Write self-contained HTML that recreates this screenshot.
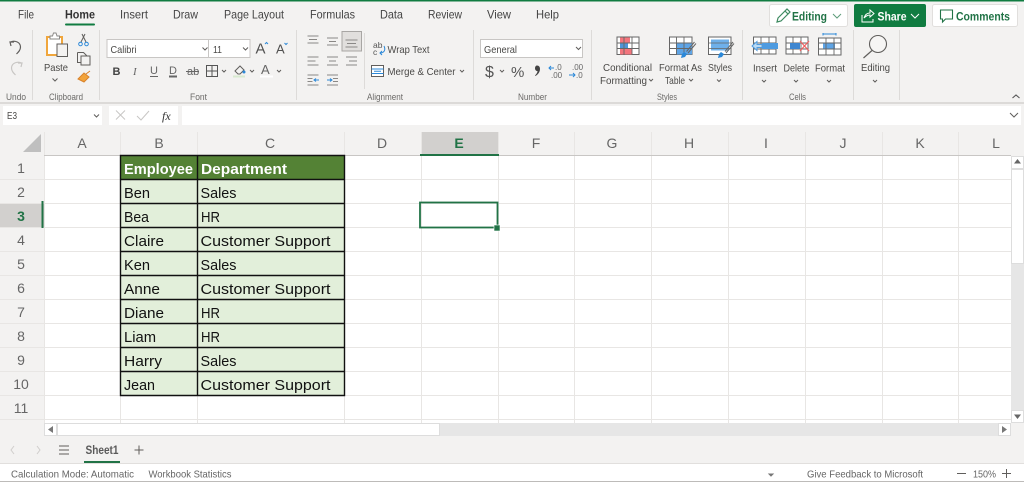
<!DOCTYPE html>
<html><head><meta charset="utf-8"><title>Excel</title>
<style>
html,body{margin:0;padding:0;background:#fff;width:1024px;height:482px;overflow:hidden}
svg{display:block;filter:blur(.35px)}
text{font-family:"Liberation Sans",sans-serif;fill:#3f3e3d;font-size:10px}
.tab{font-size:12px;fill:#444}
.lab{font-size:9.5px;fill:#6b6a68}
.rb{font-size:10.5px;fill:#4a4947}
.hd{font-size:14px;fill:#666;text-anchor:middle}
.c{font-size:14.5px;fill:#111}
.h{font-size:14.5px;fill:#fff;font-weight:bold}
.st{font-size:10.5px;fill:#666}
.g{font-size:12px;fill:#217346;font-weight:bold}
</style></head><body>
<svg width="1024" height="482" viewBox="0 0 1024 482" xmlns="http://www.w3.org/2000/svg">
<rect width="1024" height="482" fill="#fff"/>
<!-- ribbon -->
<rect width="1024" height="132" fill="#f3f2f1"/>
<rect width="1024" height="1.5" fill="#107c41"/>
<rect y="102" width="1024" height="2" fill="#dcdad8"/>
<text class="tab" x="18" y="18.500" textLength="16" lengthAdjust="spacingAndGlyphs">File</text>
<text class="tab" x="65" y="18.500" textLength="30" lengthAdjust="spacingAndGlyphs" style="font-weight:bold;fill:#333">Home</text>
<rect x="65" y="23.500" width="30" height="2" rx="1" fill="#107c41"/>
<text class="tab" x="120" y="18.500" textLength="28" lengthAdjust="spacingAndGlyphs">Insert</text>
<text class="tab" x="173" y="18.500" textLength="25" lengthAdjust="spacingAndGlyphs">Draw</text>
<text class="tab" x="224" y="18.500" textLength="60" lengthAdjust="spacingAndGlyphs">Page Layout</text>
<text class="tab" x="310" y="18.500" textLength="45" lengthAdjust="spacingAndGlyphs">Formulas</text>
<text class="tab" x="380" y="18.500" textLength="23" lengthAdjust="spacingAndGlyphs">Data</text>
<text class="tab" x="428" y="18.500" textLength="34" lengthAdjust="spacingAndGlyphs">Review</text>
<text class="tab" x="487" y="18.500" textLength="24" lengthAdjust="spacingAndGlyphs">View</text>
<text class="tab" x="536" y="18.500" textLength="23" lengthAdjust="spacingAndGlyphs">Help</text>
<!-- top right buttons -->
<rect x="769.500" y="4.500" width="78" height="22" rx="2" fill="#fff" stroke="#e1dfdd"/>
<path d="M777 22l1-4 9-9 3 3-9 9zM785 11l3 3" fill="none" stroke="#3d8a60" stroke-width="1.200"/>
<text class="g" x="792" y="20.500" textLength="35" lengthAdjust="spacingAndGlyphs">Editing</text>
<path d="M833 14l4 4 4-4" fill="none" stroke="#5d9c7a" stroke-width="1"/>
<rect x="854" y="4" width="72" height="23" rx="2" fill="#107c41"/>
<path d="M862 15v7h11v-3M864 18c1-3 3-5 6-5v-3l4 3.500-4 3.500v-2c-2 0-4 1-6 3z" fill="none" stroke="#fff" stroke-width="1"/>
<text x="877.500" y="20.500" textLength="29" lengthAdjust="spacingAndGlyphs" style="font-size:12px;font-weight:bold;fill:#fff">Share</text>
<path d="M911 14l4 4 4-4" fill="none" stroke="#fff" stroke-width="1"/>
<rect x="932.500" y="4.500" width="85" height="22" rx="2" fill="#fff" stroke="#e1dfdd"/>
<path d="M940.500 10h12v9h-7l-3 3v-3h-2z" fill="none" stroke="#217346" stroke-width="1.100"/>
<text class="g" x="956" y="20.500" textLength="54" lengthAdjust="spacingAndGlyphs">Comments</text>
<!-- separators -->
<path d="M32.500 30v70M99.500 30v70M296.500 30v70M364.500 33v56M473.500 30v70M591.500 30v70M742.500 30v70M853.500 30v70M899.500 30v70" stroke="#dddbd9" stroke-width="1"/>
<!-- undo / redo -->
<path d="M11 46l-1 -4 4 0M10.500 42c4-2 10 0 10 5 0 3-2 5-4 7" fill="none" stroke="#605e5c" stroke-width="1.200"/>
<path d="M21 67l1-4-4 0M21.500 63c-4-2-10 0-10 5 0 3 2 5 4 7" fill="none" stroke="#c8c6c4" stroke-width="1.200"/>
<text class="lab" x="6" y="100" textLength="20" lengthAdjust="spacingAndGlyphs">Undo</text>
<!-- clipboard -->
<path d="M47 37h15v18H47z" fill="#fff" stroke="#f0a63c" stroke-width="2"/>
<path d="M50 36h2.500l1-3h2.500l1 3h2.500v3h-9.500z" fill="#fff" stroke="#8a8886"/>
<rect x="57" y="44" width="10.500" height="12.500" fill="#f3f2f1" stroke="#605e5c"/>
<text class="rb" x="44" y="71" textLength="24" lengthAdjust="spacingAndGlyphs">Paste</text>
<path d="M52.500 78.500l2.500 2.500 2.500-2.500M86 42l-4-8M81 42l4-8" fill="none" stroke="#605e5c"/>
<circle cx="80.500" cy="44" r="1.800" fill="none" stroke="#2b88d8"/><circle cx="86.500" cy="44" r="1.800" fill="none" stroke="#2b88d8"/>
<path d="M77.500 52.500h6l3 3v9h-5M77.500 52.500v10h3" fill="none" stroke="#605e5c"/><rect x="81" y="56" width="9" height="9" fill="#f3f2f1" stroke="#605e5c"/>
<path d="M78 79l6-6 5 4-5 5zM86 74l4-3" fill="#f2a33a" stroke="#d9822b"/>
<text class="lab" x="49" y="100" textLength="34" lengthAdjust="spacingAndGlyphs">Clipboard</text>
<!-- font -->
<rect x="107" y="39.500" width="143" height="18" fill="#fff" stroke="#c8c6c4"/>
<path d="M208.500 40v17" stroke="#c8c6c4"/>
<text class="rb" x="110.500" y="53" textLength="26" lengthAdjust="spacingAndGlyphs">Calibri</text>
<text class="rb" x="213" y="53" textLength="9" lengthAdjust="spacingAndGlyphs">11</text>
<path d="M202.500 47.500l2.500 2.500 2.500-2.500M243 47.500l2.500 2.500 2.500-2.500" fill="none" stroke="#605e5c"/>
<text x="255.500" y="53.500" style="font-size:15px;fill:#505050">A</text><path d="M265 44l1.500-1.500 1.500 1.500" fill="none" stroke="#2b88d8"/>
<text x="276" y="53.500" style="font-size:13px;fill:#505050">A</text><path d="M284.500 43l1.500 1.500 1.500-1.500" fill="none" stroke="#2b88d8"/>
<text x="112.500" y="75" style="font-size:11px;font-weight:bold;fill:#444">B</text>
<text x="133" y="75" style="font-size:11px;font-style:italic;fill:#666;font-family:'Liberation Serif',serif">I</text>
<text x="150" y="74" style="font-size:11px;fill:#666">U</text><path d="M150 76.500h8" stroke="#666"/>
<text x="169" y="74" style="font-size:11px;fill:#666">D</text><path d="M169 76.500h8" stroke="#666" stroke-width="2"/>
<text x="187" y="75" style="font-size:11px;fill:#666">ab</text><path d="M186 71.500h13" stroke="#666"/>
<path d="M206.500 65.500h11v11h-11zM212 65.500v11M206.500 71h11" fill="none" stroke="#555"/>
<path d="M222 70l2 2 2-2M250 70l2 2 2-2M277 70l2 2 2-2" fill="none" stroke="#605e5c"/>
<path d="M235 71l5-5 4 4-4 4h-2z" fill="none" stroke="#605e5c"/><circle cx="244" cy="72" r="1.500" fill="#2b88d8"/><rect x="233" y="75.500" width="12" height="2" fill="#d8ead0"/>
<text x="261" y="74" style="font-size:13px;fill:#666">A</text><rect x="260" y="75.500" width="13" height="2" fill="#fff"/>
<text class="lab" x="190" y="100" textLength="17" lengthAdjust="spacingAndGlyphs">Font</text>
<!-- alignment -->
<rect x="342" y="31.500" width="19.500" height="19.500" fill="#e1dfdd" stroke="#a8a6a4"/>
<path d="M307.500 36h11M309 39.500h8M307.500 43h11M327 38h11M329 41.500h7M327 45h11M345.500 40h12M347 43.500h9M345.500 47h12M307.500 57h11M307.500 61h8M307.500 65h11M327 57h11M329 61h7M327 65h11M346 57h11M349 61h8M346 65h11M307.500 75h11M307.500 78.500h5M307.500 81.500h5M307.500 85h11M327 75h11M333 78.500h5M333 81.500h5M327 85h11" stroke="#8a8886" stroke-width="1"/>
<path d="M319 80h-4M316 78.500l-2 1.500 2 1.500M327 80h4M330 78.500l2 1.500-2 1.500" fill="none" stroke="#2b88d8"/>
<text x="373" y="48" style="font-size:8.500px;fill:#555">ab</text><text x="373" y="55" style="font-size:8.500px;fill:#555">c</text>
<path d="M384 46c2 4 0 7-4 7M382 51l-2 2 2 2" fill="none" stroke="#2b88d8"/>
<text class="rb" x="387.500" y="53" textLength="42" lengthAdjust="spacingAndGlyphs">Wrap Text</text>
<rect x="371.500" y="65.500" width="12" height="11" fill="#fff" stroke="#605e5c"/><path d="M371.500 69h12M371.500 73.500h12M374 71.300h7" stroke="#2b88d8"/>
<text class="rb" x="387.500" y="75" textLength="68" lengthAdjust="spacingAndGlyphs">Merge &amp; Center</text>
<path d="M460 70l2 2 2-2" fill="none" stroke="#605e5c"/>
<text class="lab" x="367" y="100" textLength="36" lengthAdjust="spacingAndGlyphs">Alignment</text>
<!-- number -->
<rect x="480.500" y="39.500" width="102" height="18" fill="#fff" stroke="#c8c6c4"/>
<text class="rb" x="484" y="53" textLength="33" lengthAdjust="spacingAndGlyphs">General</text>
<path d="M576 47l2.500 2.500 2.500-2.500M500 70l2 2 2-2" fill="none" stroke="#605e5c"/>
<text x="485" y="77" style="font-size:16px;fill:#555">$</text>
<text x="511" y="77" style="font-size:15px;fill:#555">%</text>
<path d="M537 65.500c2 0 3 1.500 3 3.500 0 3-2 5.500-4.500 7l-.5-.5c1.500-1.500 2.500-3 2.500-4.500-1.500 0-2.500-1-2.500-3 0-1.500 1-2.500 2-2.500z" fill="#444"/>
<text x="555" y="70" style="font-size:8px;fill:#666">.0</text><text x="551" y="78" style="font-size:8px;fill:#666">.00</text>
<path d="M554 68h-5M551 66l-2 2 2 2" fill="none" stroke="#2b88d8"/>
<text x="572" y="70" style="font-size:8px;fill:#666">.00</text><text x="576" y="78" style="font-size:8px;fill:#666">.0</text>
<path d="M569 75h6M573 73l2 2-2 2" fill="none" stroke="#2b88d8"/>
<text class="lab" x="518" y="100" textLength="29" lengthAdjust="spacingAndGlyphs">Number</text>
<!-- styles -->
<rect x="617" y="37" width="22" height="17.500" fill="#fff" stroke="#666"/>
<rect x="620" y="37.500" width="10" height="6" fill="#f4757d"/><rect x="620" y="43" width="8" height="5.500" fill="#4f94d8"/><rect x="620" y="48.500" width="12" height="6" fill="#f4757d"/>
<path d="M617 43h22M617 48.500h22M624 37v17.500M632 37v17.500" stroke="#666" fill="none" stroke-width=".9"/>
<text class="rb" x="603" y="71" textLength="49" lengthAdjust="spacingAndGlyphs">Conditional</text>
<text class="rb" x="600" y="84" textLength="47" lengthAdjust="spacingAndGlyphs">Formatting</text>
<path d="M649 79l2 2 2-2" fill="none" stroke="#605e5c"/>
<rect x="669.500" y="37" width="22.500" height="17.500" fill="#fff" stroke="#666"/><rect x="676" y="43" width="16" height="11.500" fill="#5ea4e6"/><path d="M669.500 43h22.500M669.500 48.500h22.500M676.500 37v17.500M684 37v17.500" stroke="#666" stroke-width=".9"/>
<path d="M694.500 42l-8 9.500M696 43.500l-8 9.500" stroke="#666" stroke-width="1" fill="#f3f2f1"/><path d="M684 52l3 2-2 3-4 1 1-4z" fill="#2b88d8"/>
<text class="rb" x="659" y="71" textLength="43" lengthAdjust="spacingAndGlyphs">Format As</text>
<text class="rb" x="665" y="84" textLength="20" lengthAdjust="spacingAndGlyphs">Table</text>
<path d="M689 79l2 2 2-2" fill="none" stroke="#605e5c"/>
<rect x="708.500" y="37" width="22.500" height="17.500" fill="#fff" stroke="#666"/><rect x="711" y="39.500" width="18" height="11" fill="#6fb0ea"/><path d="M708.500 43h22.500M708.500 48.500h22.500" stroke="#666" stroke-width=".7"/>
<path d="M733 42l-8 9.500M734 43.500l-8 9.500" stroke="#666" fill="#f3f2f1"/><path d="M721 52l3 2-2 3-4 1 1-4z" fill="#2b88d8"/>
<text class="rb" x="708" y="71" textLength="24" lengthAdjust="spacingAndGlyphs">Styles</text>
<path d="M717 79.500l2 2 2-2" fill="none" stroke="#605e5c"/>
<text class="lab" x="657" y="100" textLength="20" lengthAdjust="spacingAndGlyphs">Styles</text>
<!-- cells -->
<rect x="753.500" y="37" width="22.500" height="17" fill="#fff" stroke="#666"/><path d="M753.500 43h22.500M753.500 49h22.500M761 37v17M769 37v17" stroke="#666" stroke-width=".9"/><rect x="762" y="43" width="16" height="6" fill="#4f9be0"/>
<path d="M762 44.500h-5v-3l-5 4.500 5 4.500v-3h5z" fill="#bcdcf5" stroke="#4f9be0"/>
<rect x="786" y="37" width="22" height="17" fill="#fff" stroke="#666"/><path d="M786 43h22M786 49h22M793 37v17M801 37v17" stroke="#666" stroke-width=".9"/><rect x="790" y="43" width="10" height="6" fill="#3f86d0"/>
<path d="M800 41l9 10M809 41l-9 10" stroke="#f06060" stroke-width="1.200"/>
<rect x="818.500" y="38" width="22.500" height="17" fill="#fff" stroke="#666"/><rect x="823" y="43" width="12" height="6" fill="#5ea4e6"/><path d="M818.500 43h22.500M818.500 49h22.500M826 38v17M834 38v17" stroke="#666" stroke-width=".9"/>
<path d="M823 34h13M823 33v2.500M836 33v2.500" stroke="#2b88d8" fill="none"/>
<text class="rb" x="753" y="71.500" textLength="24" lengthAdjust="spacingAndGlyphs">Insert</text>
<text class="rb" x="783.500" y="71.500" textLength="26" lengthAdjust="spacingAndGlyphs">Delete</text>
<text class="rb" x="815" y="71.500" textLength="30" lengthAdjust="spacingAndGlyphs">Format</text>
<path d="M762 80l2 2 2-2M794 80l2 2 2-2M827 80l2 2 2-2M873 80l2 2 2-2" fill="none" stroke="#605e5c"/>
<text class="lab" x="789" y="100" textLength="17" lengthAdjust="spacingAndGlyphs">Cells</text>
<!-- editing -->
<circle cx="878" cy="44" r="8.500" fill="#f6f5f4" stroke="#605e5c" stroke-width="1.100"/>
<path d="M872 50.500l-8.500 7.500" stroke="#605e5c" stroke-width="1.200"/>
<text class="rb" x="861" y="71" textLength="29" lengthAdjust="spacingAndGlyphs">Editing</text>
<path d="M1012.500 98l3.500-3 3.500 3" fill="none" stroke="#555" stroke-width="1.100"/>
<!-- formula bar -->
<rect x="3" y="106" width="99" height="19" fill="#fff"/>
<rect x="109" y="106" width="69" height="19" fill="#fff"/>
<rect x="182" y="106" width="839" height="19" fill="#fff"/>
<text class="rb" x="7" y="119" textLength="10" lengthAdjust="spacingAndGlyphs">E3</text>
<path d="M94 114.500l2.500 2.500 2.500-2.500M1010 113l4 4 4-4" fill="none" stroke="#605e5c"/>
<path d="M116 110.500l9 9M125 110.500l-9 9M137 116l4 4 8-9" fill="none" stroke="#c8c6c4"/>
<text x="162" y="120" style="font-size:12px;font-style:italic;font-family:'Liberation Serif',serif;fill:#333">fx</text>
<!-- grid -->
<rect y="132" width="1024" height="24" fill="#f3f2f1"/>
<rect y="156" width="44" height="267" fill="#f3f2f1"/>
<rect x="421" y="132" width="77" height="23" fill="#d2d0ce"/>
<rect y="203" width="44" height="24" fill="#d2d0ce"/>
<path d="M41 134v18H23z" fill="#bfbfbf"/>
<g stroke="#e8e6e4" stroke-width="1" fill="none">
<path d="M120.500 132v291M197.500 132v291M344.500 132v291M421.500 132v291M498.500 132v291M574.500 132v291M651.500 132v291M728.500 132v291M805.500 132v291M882.500 132v291M958.500 132v291"/>
<path d="M0 179.500h1011M0 203.500h1011M0 227.500h1011M0 251.500h1011M0 275.500h1011M0 299.500h1011M0 323.500h1011M0 347.500h1011M0 371.500h1011M0 395.500h1011M0 419.500h1011"/>
<path d="M44.500 132v291"/>
</g>
<path d="M44 155.500h967" stroke="#c8c6c4"/>
<rect x="420" y="154" width="79" height="2" fill="#217346"/>
<rect x="41.500" y="201" width="2" height="27" fill="#217346"/>
<text class="hd" x="82" y="148">A</text><text class="hd" x="159" y="148">B</text><text class="hd" x="270" y="148">C</text><text class="hd" x="382" y="148">D</text>
<text class="hd" x="459" y="148" style="fill:#217346;font-weight:bold">E</text>
<text class="hd" x="536" y="148">F</text><text class="hd" x="612" y="148">G</text><text class="hd" x="689" y="148">H</text><text class="hd" x="766" y="148">I</text><text class="hd" x="843" y="148">J</text><text class="hd" x="920" y="148">K</text><text class="hd" x="996" y="148">L</text>
<text class="hd" x="21" y="173">1</text><text class="hd" x="21" y="197">2</text>
<text class="hd" x="21" y="221" style="fill:#217346;font-weight:bold">3</text>
<text class="hd" x="21" y="245">4</text><text class="hd" x="21" y="269">5</text><text class="hd" x="21" y="293">6</text><text class="hd" x="21" y="317">7</text><text class="hd" x="21" y="341">8</text><text class="hd" x="21" y="365">9</text><text class="hd" x="21" y="389">10</text><text class="hd" x="21" y="413">11</text>
<!-- table -->
<rect x="120.500" y="155.500" width="224" height="24" fill="#548235"/>
<rect x="120.500" y="179.500" width="224" height="216" fill="#e2efda"/>
<g stroke="#111" stroke-width="1.400" fill="none">
<path d="M120.500 155.500h224v240h-224zM197.500 155.500v240"/>
<path d="M120.500 179.500h224M120.500 203.500h224M120.500 227.500h224M120.500 251.500h224M120.500 275.500h224M120.500 299.500h224M120.500 323.500h224M120.500 347.500h224M120.500 371.500h224"/>
</g>
<text class="h" x="124" y="174" textLength="69" lengthAdjust="spacingAndGlyphs">Employee</text>
<text class="h" x="201" y="174" textLength="86" lengthAdjust="spacingAndGlyphs">Department</text>
<text class="c" x="124" y="198" textLength="26" lengthAdjust="spacingAndGlyphs">Ben</text><text class="c" x="200.500" y="198" textLength="36" lengthAdjust="spacingAndGlyphs">Sales</text>
<text class="c" x="124" y="222" textLength="25" lengthAdjust="spacingAndGlyphs">Bea</text><text class="c" x="201" y="222" textLength="19" lengthAdjust="spacingAndGlyphs">HR</text>
<text class="c" x="124" y="246" textLength="40" lengthAdjust="spacingAndGlyphs">Claire</text><text class="c" x="200.500" y="246" textLength="130" lengthAdjust="spacingAndGlyphs">Customer Support</text>
<text class="c" x="124" y="270" textLength="26" lengthAdjust="spacingAndGlyphs">Ken</text><text class="c" x="200.500" y="270" textLength="36" lengthAdjust="spacingAndGlyphs">Sales</text>
<text class="c" x="124" y="294" textLength="36" lengthAdjust="spacingAndGlyphs">Anne</text><text class="c" x="200.500" y="294" textLength="130" lengthAdjust="spacingAndGlyphs">Customer Support</text>
<text class="c" x="124" y="318" textLength="40" lengthAdjust="spacingAndGlyphs">Diane</text><text class="c" x="201" y="318" textLength="19" lengthAdjust="spacingAndGlyphs">HR</text>
<text class="c" x="124" y="342" textLength="32" lengthAdjust="spacingAndGlyphs">Liam</text><text class="c" x="201" y="342" textLength="19" lengthAdjust="spacingAndGlyphs">HR</text>
<text class="c" x="124" y="366" textLength="38" lengthAdjust="spacingAndGlyphs">Harry</text><text class="c" x="200.500" y="366" textLength="36" lengthAdjust="spacingAndGlyphs">Sales</text>
<text class="c" x="124" y="390" textLength="31" lengthAdjust="spacingAndGlyphs">Jean</text><text class="c" x="200.500" y="390" textLength="130" lengthAdjust="spacingAndGlyphs">Customer Support</text>
<!-- selection -->
<rect x="420" y="202.500" width="77.500" height="25" fill="none" stroke="#217346" stroke-width="1.800"/>
<rect x="494" y="225" width="6" height="6" fill="#217346" stroke="#fff" stroke-width=".6"/>
<!-- scrollbars -->
<rect x="1011" y="132" width="13" height="24" fill="#f3f2f1"/>
<rect x="1011" y="156" width="13" height="267" fill="#e6e6e6"/>
<rect x="1011.500" y="156.500" width="12" height="12" fill="#fff" stroke="#ddd"/>
<rect x="1011.500" y="169.500" width="12" height="94" fill="#fff" stroke="#ddd"/>
<rect x="1011.500" y="410.500" width="12" height="12" fill="#fff" stroke="#ddd"/>
<path d="M1017.500 159l3.500 4.500h-7zM1017.500 419l3.500-4.500h-7z" fill="#666"/>
<rect x="0" y="423" width="1024" height="41" fill="#f3f2f1"/>
<rect x="44" y="423" width="967" height="13" fill="#e6e6e6"/>
<rect x="44.500" y="423.500" width="12" height="12" fill="#fff" stroke="#ddd"/>
<rect x="57.500" y="423.500" width="382" height="12" fill="#fff" stroke="#ddd"/>
<rect x="998.500" y="423.500" width="12" height="12" fill="#fff" stroke="#ddd"/>
<path d="M48 429.500l5-3.500v7zM1007 429.500l-5-3.500v7z" fill="#777"/>
<!-- sheet tabs -->
<path d="M14 446l-3 4 3 4M37 446l3 4-3 4" fill="none" stroke="#d0cecc" stroke-width="1"/>
<path d="M59 446h10M59 450h10M59 454h10" stroke="#605e5c" stroke-width="1"/>
<text x="85.500" y="454" textLength="33" lengthAdjust="spacingAndGlyphs" style="font-size:12px;font-weight:bold;fill:#5a5a5a">Sheet1</text>
<rect x="84" y="461" width="36" height="2" fill="#217346"/>
<path d="M139 445.500v9M134.500 450h9" stroke="#605e5c" stroke-width="1"/>
<!-- status -->
<rect y="463" width="1024" height="18" fill="#fff"/>
<path d="M0 463.500h1024" stroke="#e1dfdd"/>
<rect y="481" width="1024" height="1" fill="#bdbbb9"/>
<text class="st" x="11" y="477.500" textLength="123" lengthAdjust="spacingAndGlyphs">Calculation Mode: Automatic</text>
<text class="st" x="148.500" y="477.500" textLength="83" lengthAdjust="spacingAndGlyphs">Workbook Statistics</text>
<path d="M769 474l2 2 2-2z" fill="#777" stroke="#777"/>
<text class="st" x="807" y="477.500" textLength="116" lengthAdjust="spacingAndGlyphs">Give Feedback to Microsoft</text>
<path d="M957 473.500h9M1002 473.500h9M1006.500 469v9" stroke="#605e5c" stroke-width="1"/>
<text class="st" x="973" y="477.500" textLength="23" lengthAdjust="spacingAndGlyphs">150%</text>
</svg>
</body></html>
